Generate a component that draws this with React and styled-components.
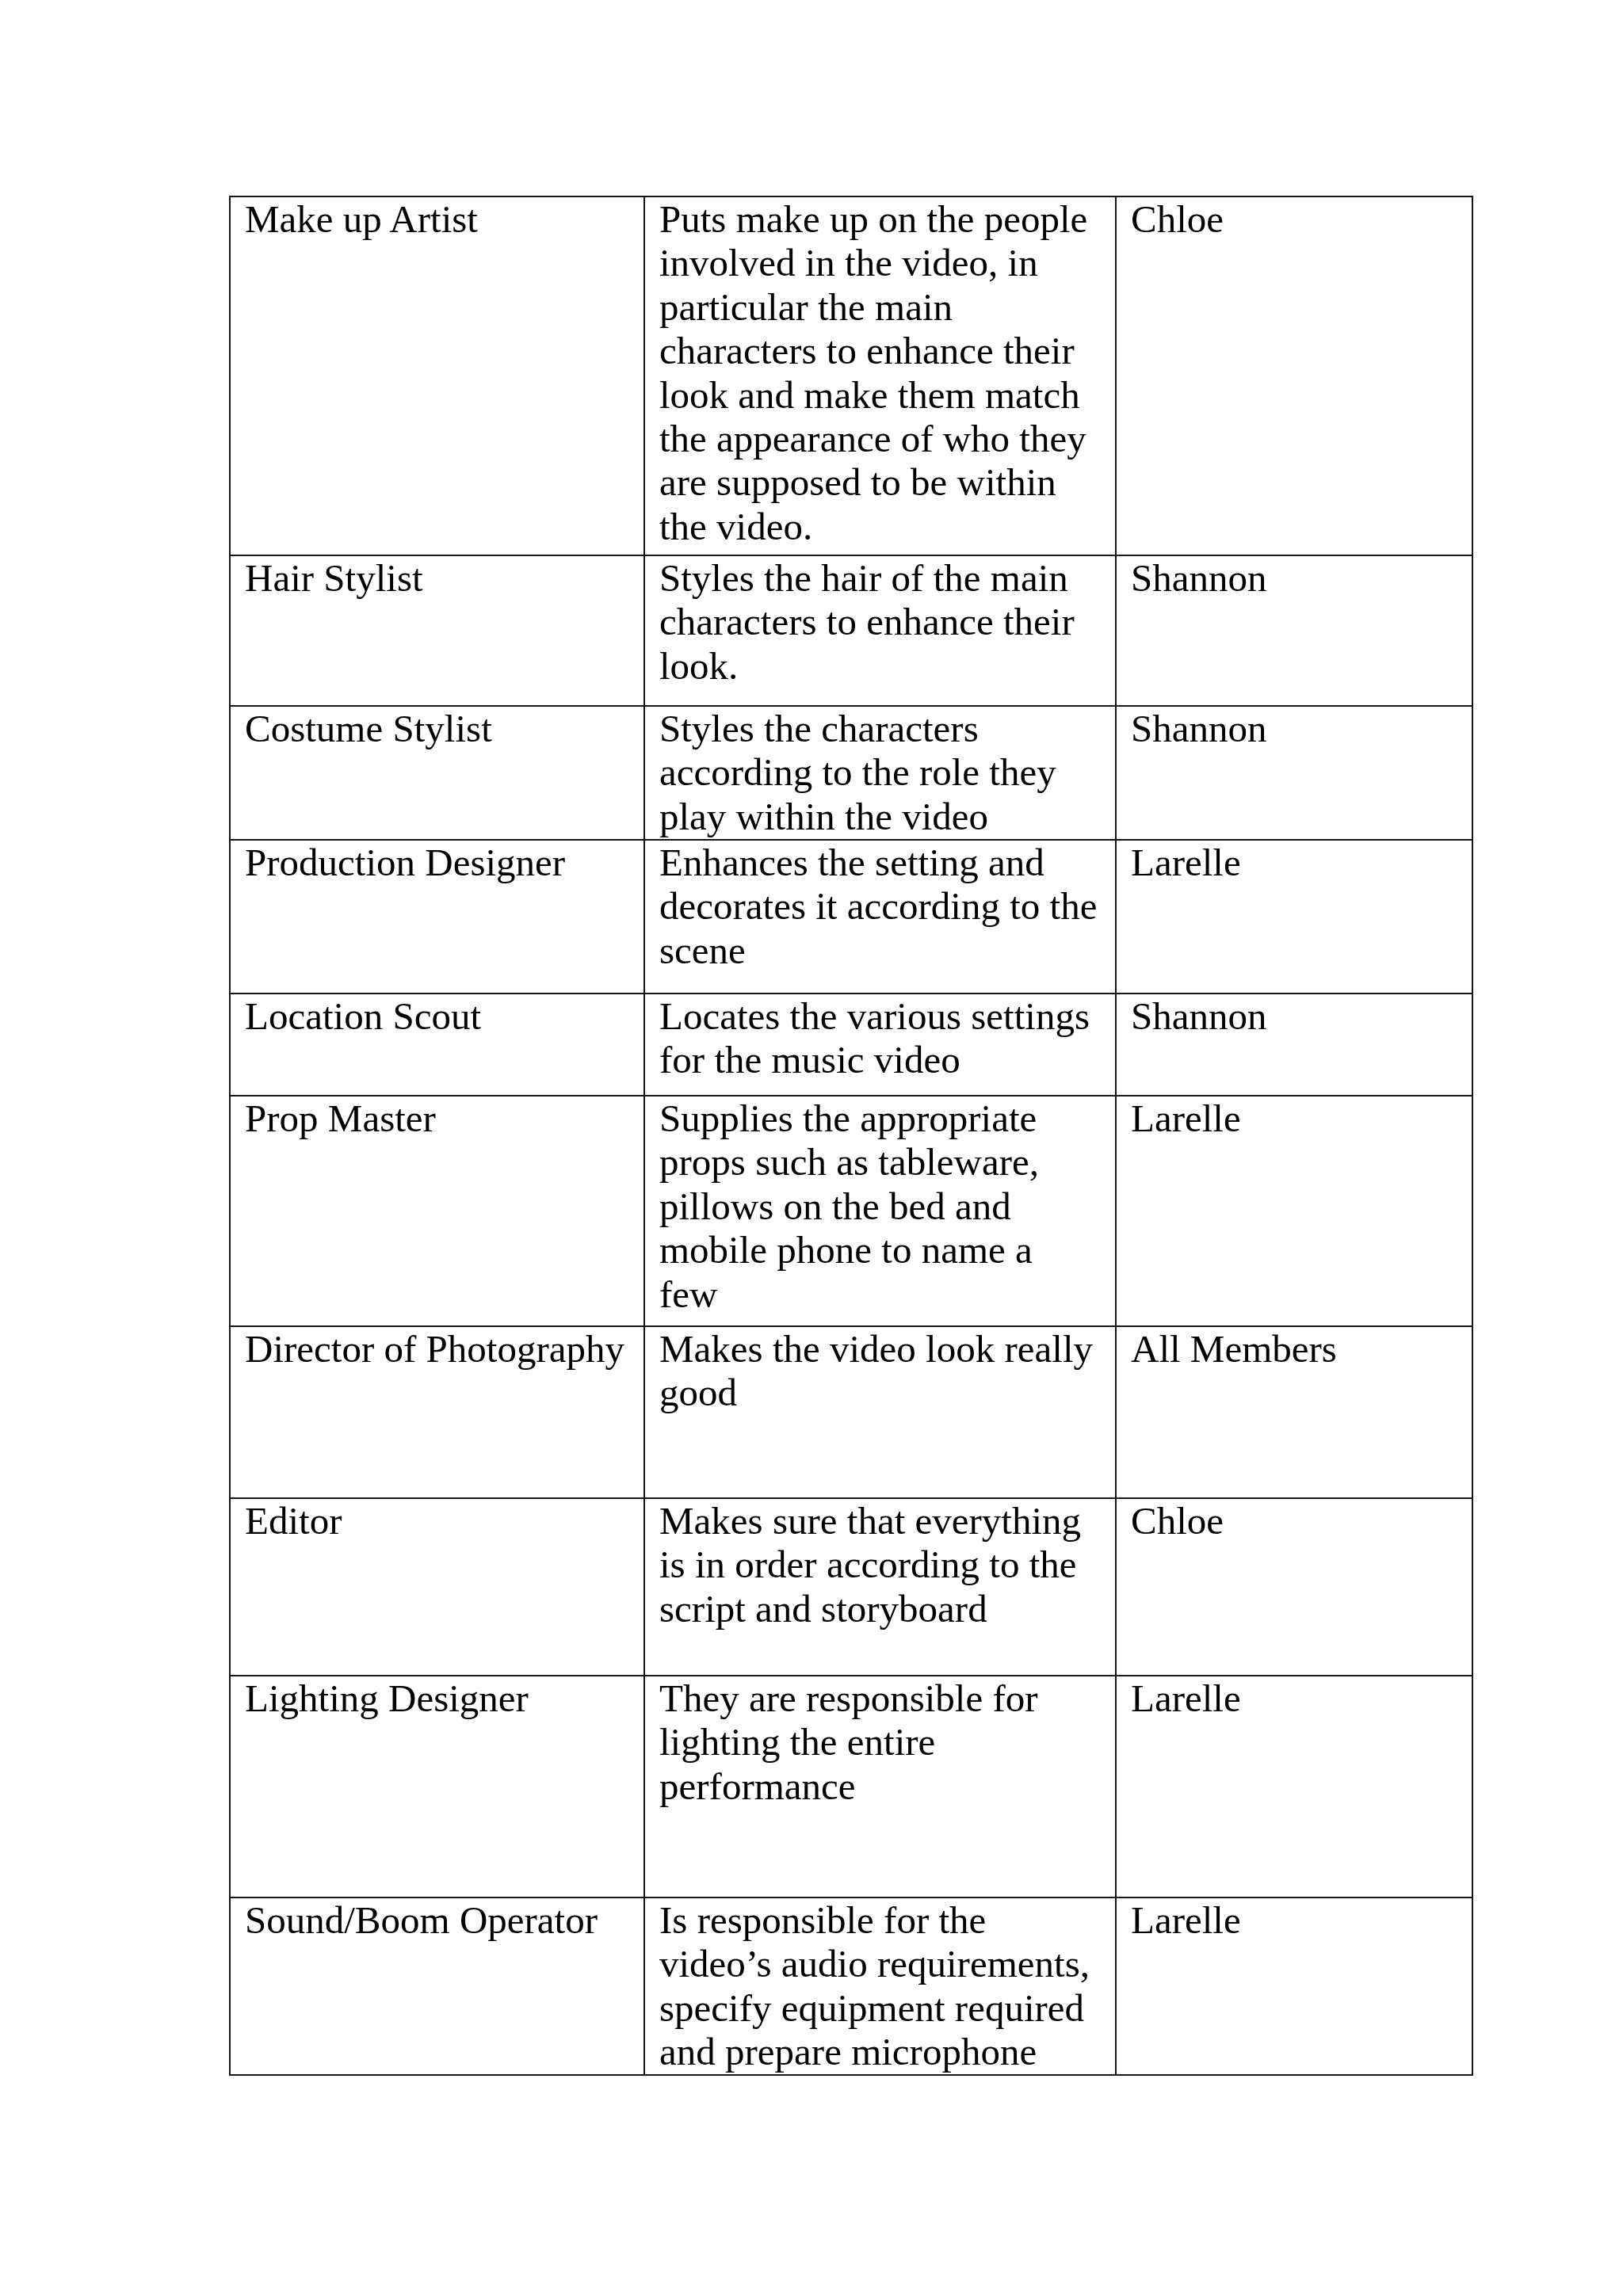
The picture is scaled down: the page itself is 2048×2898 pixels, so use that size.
import React from "react";
import styled, { createGlobalStyle } from "styled-components";

const GlobalStyle = createGlobalStyle`
    html, body {
        margin: 0;
        padding: 0;
        background: #fff;
    }
`;

const rows = [
    {
        id: 0,
        height: 451,
        role: ['Make up Artist'],
        duty: [
            'Puts make up on the people',
            'involved in the video, in',
            'particular the main',
            'characters to enhance their',
            'look and make them match',
            'the appearance of who they',
            'are supposed to be within',
            'the video.',
        ],
        member: ['Chloe'],
    },
    {
        id: 1,
        height: 188,
        role: ['Hair Stylist'],
        duty: ['Styles the hair of the main', 'characters to enhance their', 'look.'],
        member: ['Shannon'],
    },
    {
        id: 2,
        height: 167,
        role: ['Costume Stylist'],
        duty: ['Styles the characters', 'according to the role they', 'play within the video'],
        member: ['Shannon'],
    },
    {
        id: 3,
        height: 192,
        role: ['Production Designer'],
        duty: ['Enhances the setting and', 'decorates it according to the', 'scene'],
        member: ['Larelle'],
    },
    {
        id: 4,
        height: 127,
        role: ['Location Scout'],
        duty: ['Locates the various settings', 'for the music video'],
        member: ['Shannon'],
    },
    {
        id: 5,
        height: 289,
        role: ['Prop Master'],
        duty: [
            'Supplies the appropriate',
            'props such as tableware,',
            'pillows on the bed and',
            'mobile phone to name a',
            'few',
        ],
        member: ['Larelle'],
    },
    {
        id: 6,
        height: 215,
        role: ['Director of Photography'],
        duty: ['Makes the video look really', 'good'],
        member: ['All Members'],
    },
    {
        id: 7,
        height: 222,
        role: ['Editor'],
        duty: ['Makes sure that everything', 'is in order according to the', 'script and storyboard'],
        member: ['Chloe'],
    },
    {
        id: 8,
        height: 278,
        role: ['Lighting Designer'],
        duty: ['They are responsible for', 'lighting the entire', 'performance'],
        member: ['Larelle'],
    },
    {
        id: 9,
        height: 222,
        role: ['Sound/Boom Operator'],
        duty: [
            'Is responsible for the',
            'video\u2019s audio requirements,',
            'specify equipment required',
            'and prepare microphone',
        ],
        member: ['Larelle'],
    },
];

const CellText = ({ lines }) => (
    <>
        {lines.map((line, i) => (
            <Line key={i}>{line}</Line>
        ))}
    </>
);

export default function App() {
    return (
        <>
            <GlobalStyle />
            <Page>
                <Table>
                    {rows.map((row) => {
                        const { id, height, role, duty, member } = row;
                        return (
                            <React.Fragment key={id}>
                                <Cell $h={height}>
                                    <CellText lines={role} />
                                </Cell>
                                <Cell $h={height}>
                                    <CellText lines={duty} />
                                </Cell>
                                <Cell $h={height}>
                                    <CellText lines={member} />
                                </Cell>
                            </React.Fragment>
                        );
                    })}
                </Table>
            </Page>
        </>
    );
}

const Page = styled.div`
    width: 2048px;
    min-height: 2898px;
    box-sizing: border-box;
    padding: 247px 0 0 289px;
    background: #fff;
`;

const Table = styled.div`
    display: grid;
    grid-template-columns: 521px 593px 448px;
    gap: 2px;
    padding: 2px;
    width: fit-content;
    background: #161616;
`;

const Cell = styled.div`
    height: ${(p) => p.$h}px;
    box-sizing: border-box;
    padding: 0 0 0 18px;
    background: #fff;
    overflow: visible;
    font-family: "Liberation Serif", "Times New Roman", serif;
    font-size: 49px;
    line-height: 55.4px;
    color: #000;
`;

const Line = styled.span`
    display: block;
    white-space: nowrap;
`;
